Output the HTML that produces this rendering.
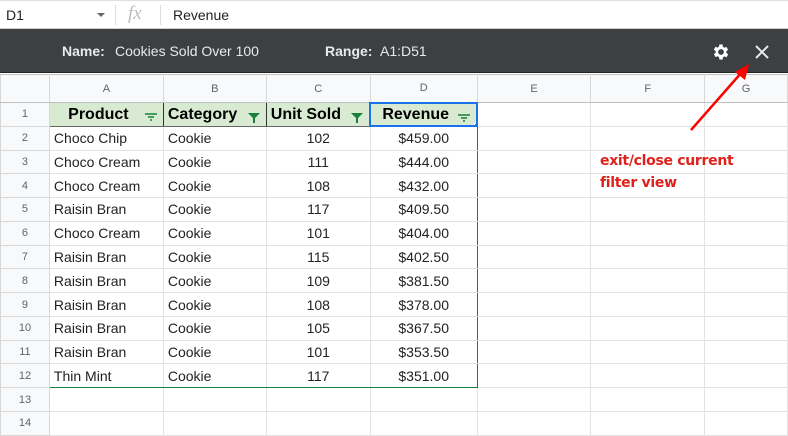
<!DOCTYPE html><html><head><style>
*{margin:0;padding:0;box-sizing:border-box}
body{width:788px;height:422px;overflow:hidden;background:#fff;font-family:"Liberation Sans",Arial,sans-serif;position:relative}
.fb{position:absolute;left:0;top:0;width:788px;height:29px;border-top:1px solid #e0e0e0;border-bottom:1px solid #d0d0d0;font-size:14px;color:#222}
.bar{position:absolute;left:0;top:29px;width:788px;height:44px;background:#3c4043;color:#e8eaed;font-size:14px;font-weight:bold;border-bottom:1px solid #222}
table{position:absolute;left:0;top:74px;border-collapse:collapse;table-layout:fixed}
td{border:1px solid #e2e2e2;font-size:14px;color:#222;padding:0 4px;white-space:nowrap;overflow:hidden;height:23.77px}
tr.h td{background:#f8f9fa;color:#5f6368;font-size:11px;text-align:center;height:28px;border-color:#c0c0c0 #d8d8d8}
td.rh{background:#f8f9fa;color:#5f6368;font-size:11px;text-align:center;border-color:#d8d8d8}
tr.r1 td.c{background:#d9ead3;font-weight:bold;font-size:16px;color:#000;position:relative;border-color:#666 #333;padding-top:2px}
.c{position:relative}
.num{text-align:center}
.fi{position:absolute;right:6px;top:9px}
</style></head><body>
<div class="fb">
<span style="position:absolute;left:6px;top:6px">D1</span>
<span style="position:absolute;left:97px;top:12px;width:0;height:0;border-left:4px solid transparent;border-right:4px solid transparent;border-top:4px solid #666"></span>
<span style="position:absolute;left:115px;top:4px;width:1px;height:20px;background:#ddd"></span>
<span style="position:absolute;left:128px;top:2px;font-family:'Liberation Serif',serif;font-style:italic;color:#bbb;font-size:19px">fx</span>
<span style="position:absolute;left:160px;top:4px;width:1px;height:20px;background:#ddd"></span>
<span style="position:absolute;left:173px;top:6px">Revenue</span>
</div>
<div class="bar">
<span style="position:absolute;left:62px;top:14px">Name:</span>
<span style="position:absolute;left:115px;top:14px;font-weight:normal">Cookies Sold Over 100</span>
<span style="position:absolute;left:325px;top:14px">Range:</span>
<span style="position:absolute;left:380px;top:14px;font-weight:normal">A1:D51</span>
<svg style="position:absolute;left:711px;top:13px" width="20" height="20" viewBox="0 0 24 24"><path fill="#fff" d="M19.4 13a7.5 7.5 0 0 0 0-2l2.1-1.6-2-3.5-2.5 1a7 7 0 0 0-1.700-1L15 3h-4l-.4 2.7a7 7 0 0 0-1.7 1l-2.5-1-2 3.5L6.6 11a7.5 7.5 0 0 0 0 2l-2.1 1.6 2 3.5 2.5-1a7 7 0 0 0 1.7 1L11 21h4l.4-2.7a7 7 0 0 0 1.7-1l2.5 1 2-3.5zM13 15.5a3.5 3.5 0 1 1 0-7 3.5 3.5 0 0 1 0 7z" transform="translate(-1 0)"/></svg>
<svg style="position:absolute;left:755px;top:16px" width="14" height="14" viewBox="0 0 14 14"><path d="M1 1L13 13M13 1L1 13" stroke="#e8eaed" stroke-width="2"/></svg>
</div>
<table>
<colgroup><col style="width:49px"><col style="width:114px"><col style="width:103px"><col style="width:104px"><col style="width:107px"><col style="width:114px"><col style="width:114px"><col style="width:83px"></colgroup>
<tr class="h"><td></td><td>A</td><td>B</td><td>C</td><td>D</td><td>E</td><td>F</td><td>G</td></tr>
<tr class="r1"><td class="rh">1</td>
<td class="c" style="text-align:center;padding-right:20px">Product<svg class="fi" width="12" height="10"><path d="M0 2h12M3 5h6M5 8h2" stroke="#188038" stroke-width="1.5"/></svg></td>
<td class="c">Category<svg class="fi" width="12" height="12"><path d="M0 1h12L7 6v5H5V6z" fill="#188038"/></svg></td>
<td class="c">Unit Sold<svg class="fi" width="12" height="12"><path d="M0 1h12L7 6v5H5V6z" fill="#188038"/></svg></td>
<td class="c" style="text-align:center;padding-right:20px;border:2px solid #1a73e8">Revenue<svg class="fi" width="12" height="10"><path d="M0 2h12M3 5h6M5 8h2" stroke="#188038" stroke-width="1.5"/></svg><span style="position:absolute;right:-4px;bottom:-4px;width:6px;height:6px;background:#1a73e8;border:1px solid #fff"></span></td>
<td></td><td></td><td></td></tr>
<tr><td class="rh">2</td><td>Choco Chip</td><td>Cookie</td><td class="num">102</td><td class="num" style="border-right:1px solid #188038">$459.00</td><td></td><td></td><td></td></tr>
<tr><td class="rh">3</td><td>Choco Cream</td><td>Cookie</td><td class="num">111</td><td class="num" style="border-right:1px solid #188038">$444.00</td><td></td><td></td><td></td></tr>
<tr><td class="rh">4</td><td>Choco Cream</td><td>Cookie</td><td class="num">108</td><td class="num" style="border-right:1px solid #188038">$432.00</td><td></td><td></td><td></td></tr>
<tr><td class="rh">5</td><td>Raisin Bran</td><td>Cookie</td><td class="num">117</td><td class="num" style="border-right:1px solid #188038">$409.50</td><td></td><td></td><td></td></tr>
<tr><td class="rh">6</td><td>Choco Cream</td><td>Cookie</td><td class="num">101</td><td class="num" style="border-right:1px solid #188038">$404.00</td><td></td><td></td><td></td></tr>
<tr><td class="rh">7</td><td>Raisin Bran</td><td>Cookie</td><td class="num">115</td><td class="num" style="border-right:1px solid #188038">$402.50</td><td></td><td></td><td></td></tr>
<tr><td class="rh">8</td><td>Raisin Bran</td><td>Cookie</td><td class="num">109</td><td class="num" style="border-right:1px solid #188038">$381.50</td><td></td><td></td><td></td></tr>
<tr><td class="rh">9</td><td>Raisin Bran</td><td>Cookie</td><td class="num">108</td><td class="num" style="border-right:1px solid #188038">$378.00</td><td></td><td></td><td></td></tr>
<tr><td class="rh">10</td><td>Raisin Bran</td><td>Cookie</td><td class="num">105</td><td class="num" style="border-right:1px solid #188038">$367.50</td><td></td><td></td><td></td></tr>
<tr><td class="rh">11</td><td>Raisin Bran</td><td>Cookie</td><td class="num">101</td><td class="num" style="border-right:1px solid #188038">$353.50</td><td></td><td></td><td></td></tr>
<tr style="border-bottom:1px solid #188038"><td class="rh" style="border-bottom-color:#d8d8d8">12</td><td style="border-bottom:1px solid #188038">Thin Mint</td><td style="border-bottom:1px solid #188038">Cookie</td><td class="num" style="border-bottom:1px solid #188038">117</td><td class="num" style="border-right:1px solid #188038;border-bottom:1px solid #188038">$351.00</td><td></td><td></td><td></td></tr>
<tr><td class="rh">13</td><td></td><td></td><td></td><td></td><td></td><td></td><td></td></tr>
<tr><td class="rh">14</td><td></td><td></td><td></td><td></td><td></td><td></td><td></td></tr>
</table>
<svg style="position:absolute;left:0;top:0" width="788" height="422"><path d="M691 130L742 72" stroke="#f00" stroke-width="2.5"/><path d="M749 64L735 72L745 80z" fill="#f00"/></svg>
<div style="position:absolute;left:600px;top:150px;color:#e0201a;font-weight:bold;font-size:14px;line-height:22px;font-family:'DejaVu Sans',sans-serif;letter-spacing:-0.3px">exit/close current<br>filter view</div>
</body></html>
